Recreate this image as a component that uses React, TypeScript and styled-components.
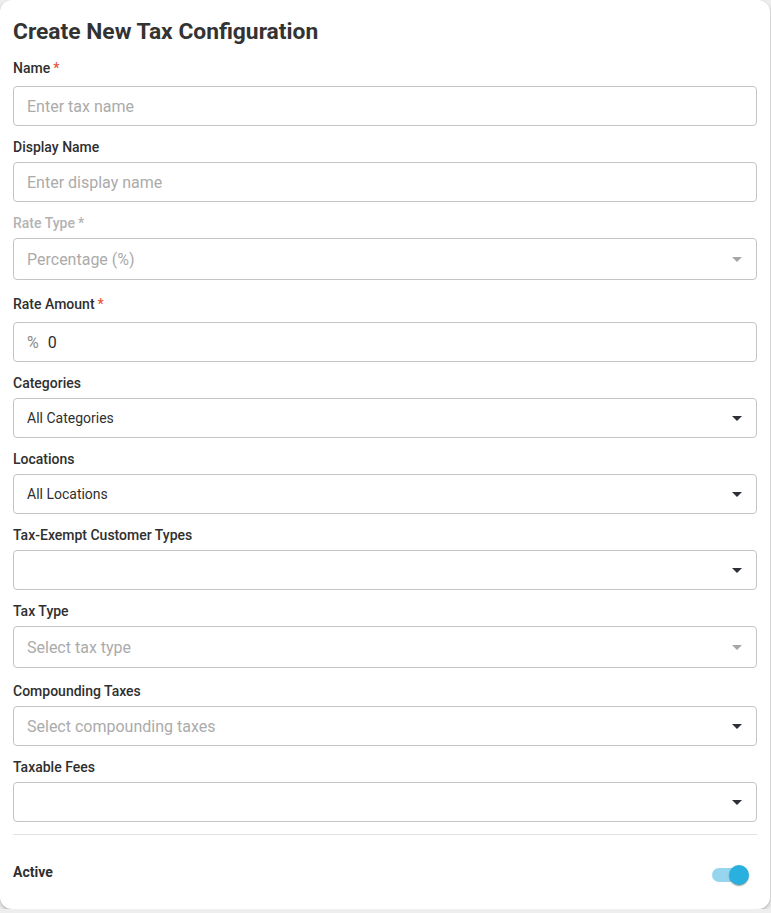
import React from "react";
import styled, { createGlobalStyle } from "styled-components";

const Global = createGlobalStyle`
  html, body { margin: 0; padding: 0; background: #eeeeee; }
  body { font-family: Roboto, "Liberation Sans", Arial, sans-serif; }
  * { box-sizing: border-box; }
`;

const Card = styled.div`
  width: 770px;
  height: 909px;
  background: #ffffff;
  border-radius: 12px;
  box-shadow: 0 2px 4px rgba(0, 0, 0, 0.18), 0 1px 2px rgba(0, 0, 0, 0.12);
  padding: 17px 13px 15px 13px;
  display: flex;
  flex-direction: column;
`;

const Title = styled.h2`
  margin: 0;
  font-size: 22.8px;
  line-height: 30px;
  font-weight: 700;
  color: #333333;
`;

const Field = styled.div<{ $mt: number }>`
  display: flex;
  flex-direction: column;
  margin-top: ${(p) => p.$mt}px;
`;

const Label = styled.label<{ $disabled?: boolean; $mb: number }>`
  font-size: 14px;
  line-height: 20px;
  font-weight: 500;
  color: ${(p) => (p.$disabled ? "#b3b3b3" : "#2f2f2f")};
  margin-bottom: ${(p) => p.$mb}px;
`;

const Star = styled.span<{ $disabled?: boolean }>`
  color: ${(p) => (p.$disabled ? "#b3b3b3" : "#e5553f")};
  margin-left: 3px;
`;

const Box = styled.div<{ $h: number }>`
  position: relative;
  height: ${(p) => p.$h}px;
  border: 1px solid #c4c4c4;
  border-radius: 4px;
  display: flex;
  align-items: center;
  padding: 0 40px 0 13px;
`;

const Placeholder = styled.span`
  font-size: 16px;
  color: #ababab;
`;

const Value = styled.span`
  font-size: 14px;
  color: #2f2f2f;
`;

const Adornment = styled.span`
  font-size: 16px;
  color: #8a8a8a;
  margin-right: 9px;
`;

const NumValue = styled.span`
  font-size: 16px;
  color: #2f2f2f;
`;

const Arrow = styled.svg<{ $muted?: boolean }>`
  position: absolute;
  right: 7px;
  top: 50%;
  margin-top: -12px;
  width: 24px;
  height: 24px;
  fill: ${(p) => (p.$muted ? "#a6a6a6" : "#2b2f36")};
`;

const Divider = styled.hr`
  margin: 12px 0 0;
  border: none;
  height: 1px;
  background: #e2e2e2;
`;

const ActiveRow = styled.div`
  margin-top: 21px;
  height: 38px;
  display: flex;
  align-items: center;
  justify-content: space-between;
`;

const ActiveLabel = styled.span`
  font-size: 14px;
  line-height: 20px;
  font-weight: 700;
  color: #2f2f2f;
  margin-bottom: 6px;
`;

const Switch = styled.div`
  position: relative;
  width: 58px;
  height: 38px;
  margin-right: -1px;
`;

const Track = styled.span`
  position: absolute;
  left: 12px;
  top: 12px;
  width: 34px;
  height: 14px;
  border-radius: 7px;
  background: #95d6ee;
`;

const Thumb = styled.span`
  position: absolute;
  left: 29px;
  top: 9px;
  width: 20px;
  height: 20px;
  border-radius: 50%;
  background: #2ab0de;
  box-shadow: 0 2px 1px -1px rgba(0, 0, 0, 0.2), 0 1px 1px 0 rgba(0, 0, 0, 0.14),
    0 1px 3px 0 rgba(0, 0, 0, 0.12);
`;

type FieldDef = {
  label: string;
  required?: boolean;
  disabled?: boolean;
  mt: number;
  mb: number;
  h: number;
  placeholder?: string;
  value?: string;
  amount?: boolean;
  arrow?: "dark" | "muted";
};

const fields: FieldDef[] = [
  { label: "Name", required: true, mt: 11, mb: 8, h: 40, placeholder: "Enter tax name" },
  { label: "Display Name", mt: 11, mb: 5, h: 40, placeholder: "Enter display name" },
  { label: "Rate Type", required: true, disabled: true, mt: 11, mb: 5, h: 42, placeholder: "Percentage (%)", arrow: "muted" },
  { label: "Rate Amount", required: true, mt: 14, mb: 8, h: 40, amount: true },
  { label: "Categories", mt: 11, mb: 5, h: 40, value: "All Categories", arrow: "dark" },
  { label: "Locations", mt: 11, mb: 5, h: 40, value: "All Locations", arrow: "dark" },
  { label: "Tax-Exempt Customer Types", mt: 11, mb: 5, h: 40, arrow: "dark" },
  { label: "Tax Type", mt: 11, mb: 5, h: 42, placeholder: "Select tax type", arrow: "muted" },
  { label: "Compounding Taxes", mt: 13, mb: 5, h: 40, placeholder: "Select compounding taxes", arrow: "dark" },
  { label: "Taxable Fees", mt: 11, mb: 5, h: 40, arrow: "dark" },
];

function DropArrow({ muted }: { muted?: boolean }) {
  return (
    <Arrow $muted={muted} viewBox="0 0 24 24" aria-hidden="true">
      <path d="M7 10l5 5 5-5z" />
    </Arrow>
  );
}

export default function App() {
  return (
    <>
      <Global />
      <Card>
        <Title>Create New Tax Configuration</Title>
        {fields.map((f) => (
          <Field key={f.label} $mt={f.mt}>
            <Label $disabled={f.disabled} $mb={f.mb}>
              {f.label}
              {f.required && <Star $disabled={f.disabled}>*</Star>}
            </Label>
            <Box $h={f.h}>
              {f.placeholder && <Placeholder>{f.placeholder}</Placeholder>}
              {f.value && <Value>{f.value}</Value>}
              {f.amount && (
                <>
                  <Adornment>%</Adornment>
                  <NumValue>0</NumValue>
                </>
              )}
              {f.arrow && <DropArrow muted={f.arrow === "muted"} />}
            </Box>
          </Field>
        ))}
        <Divider />
        <ActiveRow>
          <ActiveLabel>Active</ActiveLabel>
          <Switch>
            <Track />
            <Thumb />
          </Switch>
        </ActiveRow>
      </Card>
    </>
  );
}
